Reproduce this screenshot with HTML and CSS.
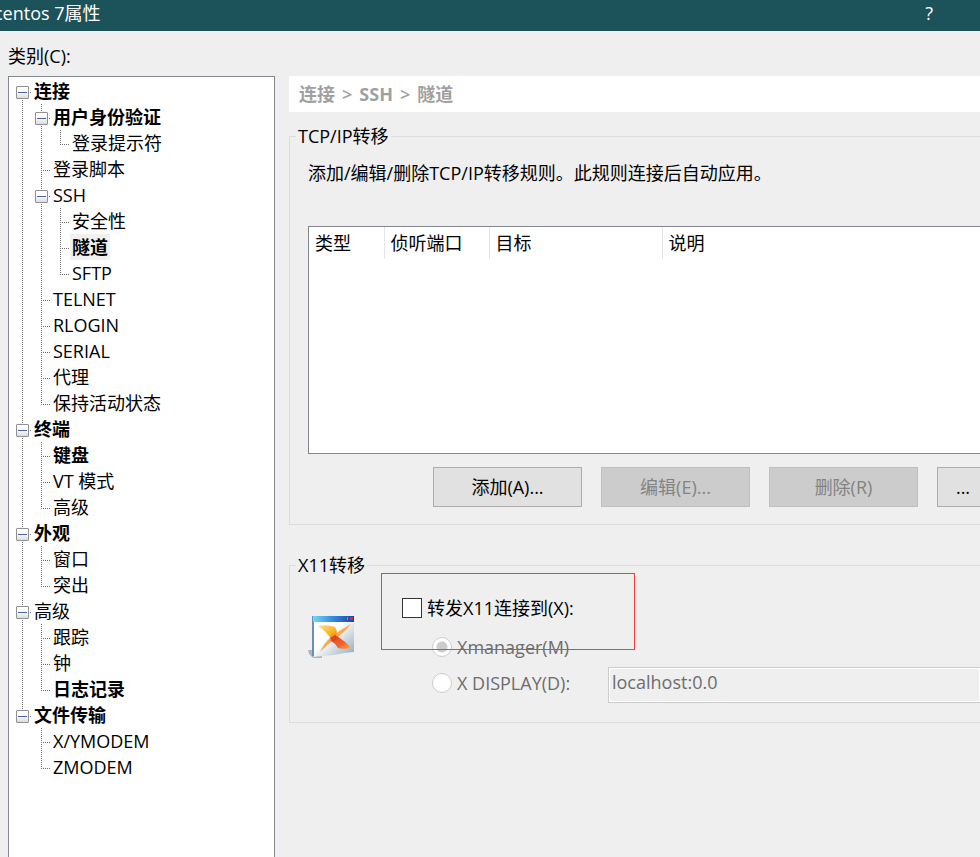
FILE: index.html
```html
<!DOCTYPE html>
<html lang="zh-CN">
<head>
<meta charset="utf-8">
<title>centos 7属性</title>
<link rel="stylesheet" href="styles.css">
</head>
<body>
<header class="titlebar">
  <h1 class="title">centos 7属性</h1>
  <button class="help" type="button">?</button>
</header>
<main class="dialog">
  <nav class="sidebar">
    <span class="side-label" id="cat">类别(C):</span>
    <div class="tree-box">
      <ul class="tree" aria-labelledby="cat">
        <li><div class="row"><button class="toggle" type="button" aria-label="连接"></button><b class="name">连接</b></div>
          <ul>
            <li><div class="row"><button class="toggle" type="button" aria-label="用户身份验证"></button><b class="name">用户身份验证</b></div>
              <ul>
                <li><div class="row"><span class="name">登录提示符</span></div></li>
              </ul>
            </li>
            <li><div class="row"><span class="name">登录脚本</span></div></li>
            <li><div class="row"><button class="toggle" type="button" aria-label="SSH"></button><span class="name">SSH</span></div>
              <ul>
                <li><div class="row"><span class="name">安全性</span></div></li>
                <li><div class="row"><b class="name selected">隧道</b></div></li>
                <li><div class="row"><span class="name">SFTP</span></div></li>
              </ul>
            </li>
            <li><div class="row"><span class="name">TELNET</span></div></li>
            <li><div class="row"><span class="name">RLOGIN</span></div></li>
            <li><div class="row"><span class="name">SERIAL</span></div></li>
            <li><div class="row"><span class="name">代理</span></div></li>
            <li><div class="row"><span class="name">保持活动状态</span></div></li>
          </ul>
        </li>
        <li><div class="row"><button class="toggle" type="button" aria-label="终端"></button><b class="name">终端</b></div>
          <ul>
            <li><div class="row"><b class="name">键盘</b></div></li>
            <li><div class="row"><span class="name">VT 模式</span></div></li>
            <li><div class="row"><span class="name">高级</span></div></li>
          </ul>
        </li>
        <li><div class="row"><button class="toggle" type="button" aria-label="外观"></button><b class="name">外观</b></div>
          <ul>
            <li><div class="row"><span class="name">窗口</span></div></li>
            <li><div class="row"><span class="name">突出</span></div></li>
          </ul>
        </li>
        <li><div class="row"><button class="toggle" type="button" aria-label="高级"></button><span class="name">高级</span></div>
          <ul>
            <li><div class="row"><span class="name">跟踪</span></div></li>
            <li><div class="row"><span class="name">钟</span></div></li>
            <li><div class="row"><b class="name">日志记录</b></div></li>
          </ul>
        </li>
        <li><div class="row"><button class="toggle" type="button" aria-label="文件传输"></button><b class="name">文件传输</b></div>
          <ul>
            <li><div class="row"><span class="name">X/YMODEM</span></div></li>
            <li><div class="row"><span class="name">ZMODEM</span></div></li>
          </ul>
        </li>
      </ul>
    </div>
  </nav>

  <form class="page">
    <h2 class="crumbs"><span>连接</span><span class="sep">&gt;</span><span>SSH</span><span class="sep">&gt;</span><span>隧道</span></h2>

    <fieldset class="group">
      <legend>TCP/IP转移</legend>
      <p class="hint">添加/编辑/删除TCP/IP转移规则。此规则连接后自动应用。</p>
      <div class="list">
        <table class="rules">
          <colgroup><col class="c-type"><col class="c-port"><col class="c-target"><col></colgroup>
          <thead><tr><th>类型</th><th>侦听端口</th><th>目标</th><th>说明</th></tr></thead>
        </table>
      </div>
      <div class="actions">
        <button class="btn" type="button">添加(A)...</button>
        <button class="btn" type="button" disabled>编辑(E)...</button>
        <button class="btn" type="button" disabled>删除(R)</button>
        <button class="btn small" type="button">...</button>
      </div>
    </fieldset>

    <fieldset class="group x11">
      <legend>X11转移</legend>
      <div class="x11-body">
        <svg class="x-icon" width="48" height="46" viewBox="0 0 48 46" aria-hidden="true">
          <defs>
            <linearGradient id="bar" x1="0" x2="1"><stop offset="0" stop-color="#74d8f4"/><stop offset=".45" stop-color="#3a8fdc"/><stop offset="1" stop-color="#1b3fae"/></linearGradient>
            <linearGradient id="pane" x1="0" y1="0" x2="1" y2="1"><stop offset=".45" stop-color="#fff"/><stop offset="1" stop-color="#8fa7bb"/></linearGradient>
            <linearGradient id="gold" x1="0" y1="0" x2="1" y2="1"><stop offset="0" stop-color="#ffe08a"/><stop offset=".6" stop-color="#fbb524"/><stop offset="1" stop-color="#ee5a1c"/></linearGradient>
            <linearGradient id="fire" x1="0" y1="0" x2="1" y2="1"><stop offset="0" stop-color="#e8401c"/><stop offset=".6" stop-color="#f3642a"/><stop offset="1" stop-color="#fcb45c"/></linearGradient>
          </defs>
          <path d="M0 35h5v5l9 1v2H5l-4-4z" fill="#a9b6c2"/>
          <path d="M4 1h42v36l-10 1-10 2-11 1-11 1z" fill="url(#pane)"/>
          <path d="M4 1h2v40l-2 1z" fill="#6b8fb8"/>
          <path d="M5 1h41v6H5z" fill="url(#bar)"/>
          <path d="M39 2h1v3h-1z" fill="#2fc47a"/><path d="M42 2h3v3h-3z" fill="#e3203c"/>
          <path d="M43 9Q32 15 23 22 16 28 12 37 20 29 27 24 36 18 43 9z" fill="#f7a950"/>
          <path d="M10 11Q19 9 27 12 30 16 28 21L24 25Q18 16 10 11z" fill="url(#gold)"/>
          <path d="M22 25l7-4Q37 26 43 33 37 35 30 33 27 28 22 25z" fill="url(#fire)"/>
          <path d="M22 23l5-3 3 3-5 4z" fill="#e0441a"/>
        </svg>
        <div class="options">
          <label class="opt main"><input type="checkbox">转发X11连接到(X):</label>
          <label class="opt sub off"><input type="radio" name="target" checked disabled>Xmanager(M)</label>
          <div class="display">
            <label class="opt sub off"><input type="radio" name="target" disabled>X DISPLAY(D):</label>
            <input class="host" type="text" value="localhost:0.0" aria-label="X DISPLAY" disabled>
          </div>
        </div>
        <div class="mark" aria-hidden="true"></div>
      </div>
    </fieldset>
  </form>
</main>
</body>
</html>
```
FILE: styles.css
```css
* { box-sizing: border-box; }

body {
  margin: 0;
  min-height: 100vh;
  display: flex;
  flex-direction: column;
  overflow: hidden;
  background: #efefef;
  color: #000;
  font: 18px/26px "Open Sans", "Noto Sans CJK SC", sans-serif;
}

button, input { font: inherit; color: inherit; margin: 0; }
h1, h2, p, ul { margin: 0; padding: 0; font: inherit; }
ul { list-style: none; }

.titlebar {
  display: flex;
  justify-content: space-between;
  height: 31px;
  padding-right: 47px;
  background: #1c535b;
  color: #fff;
}
.title { margin-left: -6px; }
.help { border: 0; padding: 0; background: none; height: 26px; }

.dialog {
  flex: 1;
  display: grid;
  grid-template-columns: 267px minmax(0, 1fr);
  gap: 14px;
  padding: 12px 0 0 8px;
}

.sidebar { display: flex; flex-direction: column; gap: 7px; }
.tree-box {
  flex: 1;
  padding: 1px 7px;
  border: 1px solid #828790;
  border-bottom: 0;
  background: #fff;
}

/* Dotted guides: a vertical rail and a short branch behind each item */
.tree li {
  background-image:
    repeating-linear-gradient(to bottom, #707070 0 1px, transparent 1px 2px),
    repeating-linear-gradient(to right, #707070 0 1px, transparent 1px 2px);
  background-repeat: no-repeat;
  background-position: 6px 0, 6px 14px;
  background-size: 1px 100%, 10px 1px;
}
.tree li:last-child { background-size: 1px 14px, 10px 1px; }
.tree > li:first-child { background-position: 6px 14px, 6px 14px; }
.tree ul { margin-left: 19px; }
.row { display: flex; height: 26px; padding-left: 16px; }
.toggle {
  flex: none;
  width: 13px;
  height: 13px;
  margin: 8px 3px 0 -16px;
  padding: 0;
  border: 1px solid #919191;
  border-radius: 1px;
  background:
    linear-gradient(#4b63a7, #4b63a7) center / 9px 1px no-repeat,
    linear-gradient(#fff 40%, #dcdcdc);
}
.name { padding: 0 2px; white-space: nowrap; }
.selected { background: #f0f0f0; }

.page { padding-top: 33px; overflow: hidden; }
.crumbs {
  display: flex;
  gap: 7px;
  padding: 5px 10px;
  background: #fff;
  color: #a0a0a0;
  font-weight: 700;
}
.sep { font-weight: 600; }

.group {
  min-width: 0;
  margin: 11px 0 0;
  padding: 11px 0 17px 18px;
  border: 1px solid #dcdcdc;
  border-right: 0;
}
.group legend { margin-left: -12px; padding: 0 2px; }
.hint { white-space: nowrap; }

.list {
  height: 228px;
  margin-top: 40px;
  border: 1px solid #828790;
  border-right: 0;
  background: #fff;
}
.rules { width: 100%; table-layout: fixed; border-collapse: collapse; }
.c-type { width: 75px; }
.c-port { width: 105px; }
.c-target { width: 173px; }
.rules th {
  height: 32px;
  padding: 3px 6px;
  border-right: 1px solid #e5e5e5;
  font-weight: 400;
  text-align: left;
}
.rules th:last-child { border-right: 0; }

.actions { display: flex; gap: 19px; margin: 13px 0 0 125px; }
.btn {
  flex: none;
  width: 149px;
  height: 40px;
  padding: 0;
  border: 1px solid #adadad;
  background: #e1e1e1;
}
.btn:disabled { background: #ccc; border-color: #bfbfbf; color: #838383; }
.btn.small { width: 52px; }

.x11 { margin-top: 27px; padding: 0 0 19px 18px; }
.x11-body { position: relative; display: flex; gap: 46px; }
.x-icon { flex: none; margin-top: 37px; }
.options { flex: 1; padding-top: 17px; }
.opt { display: flex; align-items: center; gap: 5px; white-space: nowrap; }
.opt input {
  appearance: none;
  flex: none;
  width: 20px;
  height: 20px;
  border: 1px solid #333;
  background: #fff;
}
.sub { margin-left: 30px; }
.main + .sub { margin-top: 13px; }
.opt input[type="radio"] { border-color: #ccc; border-radius: 50%; }
.opt input[type="radio"]:checked { background: radial-gradient(circle, #ccc 5px, #fff 6px); }
.off { color: #6d6d6d; }
.display { display: flex; margin-top: 7px; }
.display .opt { width: 176px; height: 32px; }
.host {
  flex: 1;
  min-width: 0;
  height: 36px;
  padding: 0 3px 6px;
  border: 1px solid #ccc;
  border-right: 0;
  border-radius: 0;
  background: #efefef;
  box-shadow: inset 0 0 0 1px #fff;
  color: #6d6d6d;
}

.mark {
  position: absolute;
  left: 73px;
  top: -5px;
  width: 254px;
  height: 77px;
  border: 1px solid #f83b3b;
  pointer-events: none;
}
```
